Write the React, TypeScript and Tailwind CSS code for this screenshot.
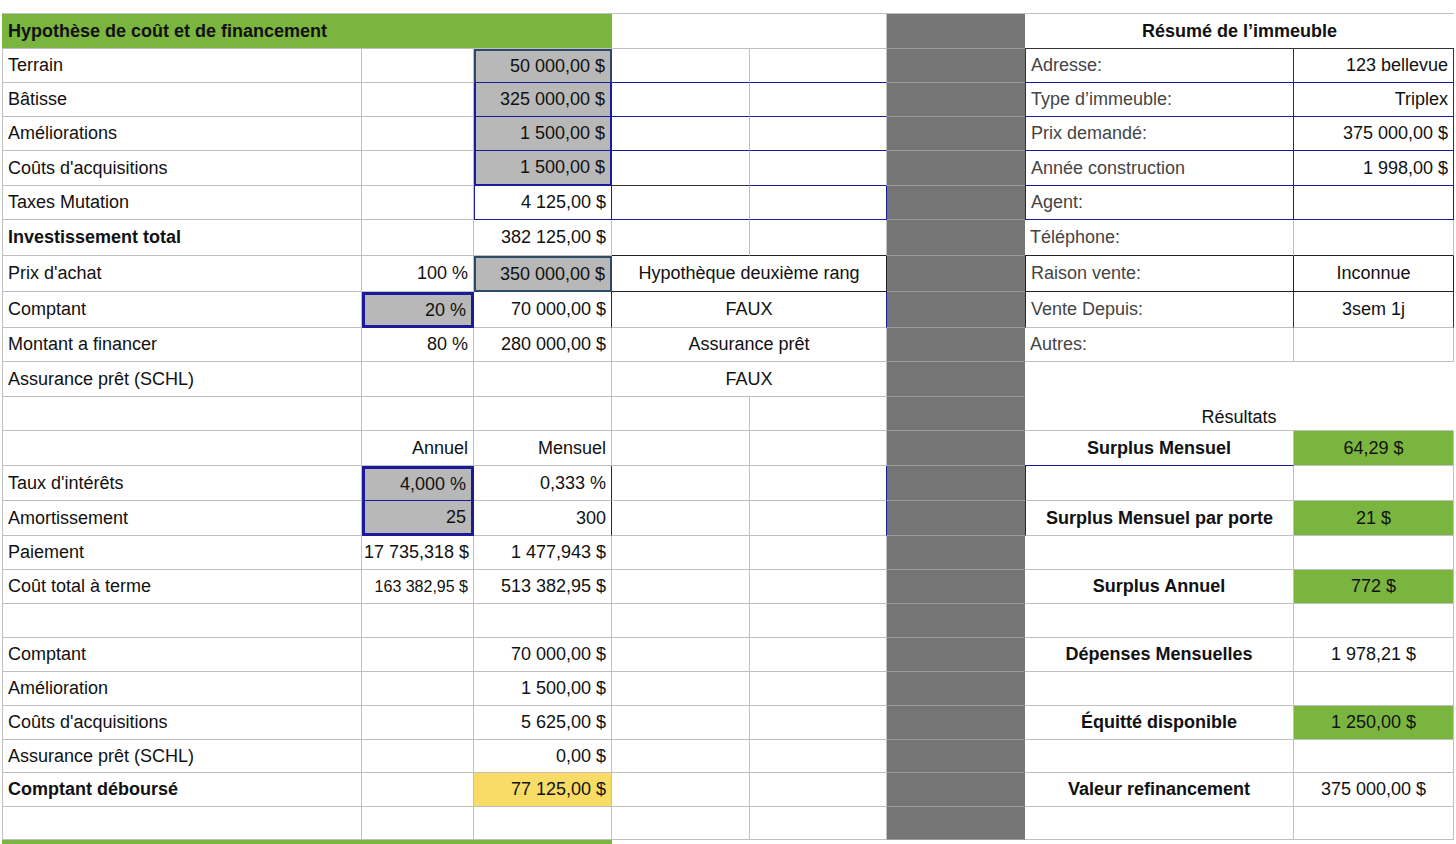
import React from "react";

type C = { t?: string; span?: number; cls?: string; box?: boolean };
const G = "bg-[#b8b8b8]";
const GR = "bg-[#7ab53f]";
const F: C = { cls: "bg-[#767676] border-b-[#9a9a9a] border-r-[#767676]" };
const E: C = {};

const rows: { h: string; cells: C[] }[] = [
  { h: "h-[34px]", cells: [{ t: "Terrain" }, E, { t: "50 000,00 $", box: true, cls: `${G} text-right border-2 border-[#2c4a66] border-b-[#1a1a9a] border-b` }, { cls: "border-b-[#1a1aa0]" }, { cls: "border-b-[#1a1aa0]" }, F, { t: "Adresse:", cls: "text-[#444] border-l border-l-[#333] border-b-[#1a1aa0] border-r-[#333]" }, { t: "123 bellevue", cls: "text-right border-b-[#1a1aa0] border-r-[#333]" }] },
  { h: "h-[34px]", cells: [{ t: "Bâtisse" }, E, { t: "325 000,00 $", box: true, cls: `${G} text-right border-x-2 border-b border-[#1a1a9a]` }, { cls: "border-b-[#1a1aa0]" }, { cls: "border-b-[#1a1aa0]" }, F, { t: "Type d’immeuble:", cls: "text-[#444] border-l border-l-[#333] border-b-[#1a1aa0] border-r-[#333]" }, { t: "Triplex", cls: "text-right border-b-[#1a1aa0] border-r-[#333]" }] },
  { h: "h-[34px]", cells: [{ t: "Améliorations" }, E, { t: "1 500,00 $", box: true, cls: `${G} text-right border-x-2 border-b border-[#1a1a9a]` }, { cls: "border-b-[#1a1aa0]" }, { cls: "border-b-[#1a1aa0]" }, F, { t: "Prix demandé:", cls: "text-[#444] border-l border-l-[#333] border-b-[#1a1aa0] border-r-[#333]" }, { t: "375 000,00 $", cls: "text-right border-b-[#1a1aa0] border-r-[#333]" }] },
  { h: "h-[35px]", cells: [{ t: "Coûts d'acquisitions" }, E, { t: "1 500,00 $", box: true, cls: `${G} text-right border-x-2 border-b-2 border-[#1a1a9a]` }, { cls: "border-b-[#333]" }, { cls: "border-b-[#1a1aa0]" }, F, { t: "Année construction", cls: "text-[#444] border-l border-l-[#333] border-b-[#1a1aa0] border-r-[#333]" }, { t: "1 998,00 $", cls: "text-right border-b-[#1a1aa0] border-r-[#333]" }] },
  { h: "h-[34px]", cells: [{ t: "Taxes Mutation" }, E, { t: "4 125,00 $", box: true, cls: "text-right border-x border-b border-[#1a1aa0]" }, { cls: "border-b-[#1a1aa0]" }, { cls: "border-b-[#1a1aa0] border-r-[#1a1aa0]" }, F, { t: "Agent:", cls: "text-[#444] border-l border-l-[#1a1aa0] border-b-[#1a1aa0] border-r-[#1a1aa0]" }, { t: "", cls: "border-b-[#1a1aa0] border-r-[#1a1aa0]" }] },
  { h: "h-[36px]", cells: [{ t: "Investissement total", cls: "font-bold" }, E, { t: "382 125,00 $", cls: "text-right" }, { cls: "border-b-[#222]" }, { cls: "border-b-[#222]" }, F, { t: "Téléphone:", cls: "text-[#444] border-b-[#222]" }, { cls: "border-b-[#222]" }] },
  { h: "h-[36px]", cells: [{ t: "Prix d'achat" }, { t: "100 %", cls: "text-right" }, { t: "350 000,00 $", box: true, cls: `${G} text-right border-2 border-[#2c4a66]` }, { t: "Hypothèque deuxième rang", span: 2, cls: "text-center border-r-[#222] border-b-[#222]" }, F, { t: "Raison vente:", cls: "text-[#444] border-l border-l-[#222] border-b-[#222] border-r-[#222]" }, { t: "Inconnue", cls: "text-center border-b-[#222] border-r-[#222]" }] },
  { h: "h-[36px]", cells: [{ t: "Comptant" }, { t: "20 %", box: true, cls: `${G} text-right border-[3px] border-[#1a1a9a]` }, { t: "70 000,00 $", cls: "text-right border-r-[#1a1aa0]" }, { t: "FAUX", span: 2, cls: "text-center border-r-[#1a1aa0]" }, F, { t: "Vente Depuis:", cls: "text-[#444] border-l border-l-[#1a1aa0] border-r-[#333]" }, { t: "3sem 1j", cls: "text-center border-r-[#333]" }] },
  { h: "h-[34px]", cells: [{ t: "Montant a financer" }, { t: "80 %", cls: "text-right" }, { t: "280 000,00 $", cls: "text-right" }, { t: "Assurance prêt", span: 2, cls: "text-center" }, F, { t: "Autres:", cls: "text-[#444]" }, E] },
  { h: "h-[35px]", cells: [{ t: "Assurance prêt (SCHL)" }, E, E, { t: "FAUX", span: 2, cls: "text-center" }, F, { span: 2, cls: "border-b-white border-r-white" }] },
  { h: "h-[34px]", cells: [E, E, E, E, E, F, { t: "Résultats", span: 2, cls: "text-center border-r-white pt-[8px]" }] },
  { h: "h-[35px]", cells: [E, { t: "Annuel", cls: "text-right" }, { t: "Mensuel", cls: "text-right" }, E, E, F, { t: "Surplus Mensuel", cls: "font-bold text-center border-b-[#1a1aa0]" }, { t: "64,29 $", cls: `${GR} text-center` }] },
  { h: "h-[35px]", cells: [{ t: "Taux d'intérêts" }, { t: "4,000 %", box: true, cls: `${G} text-right border-x-[3px] border-t-[3px] border-b border-[#1a1a9a]` }, { t: "0,333 %", cls: "text-right border-r-[#1a1aa0]" }, E, { cls: "border-r-[#1a1aa0]" }, F, { cls: "border-l border-l-[#1a1aa0]" }, E] },
  { h: "h-[35px]", cells: [{ t: "Amortissement" }, { t: "25", box: true, cls: `${G} text-right border-x-[3px] border-b-[3px] border-[#1a1a9a]` }, { t: "300", cls: "text-right border-r-[#1a1aa0]" }, E, { cls: "border-r-[#1a1aa0]" }, F, { t: "Surplus Mensuel par porte", cls: "font-bold text-center border-l border-l-[#1a1aa0]" }, { t: "21 $", cls: `${GR} text-center` }] },
  { h: "h-[34px]", cells: [{ t: "Paiement" }, { t: "17 735,318 $", cls: "text-right !pl-0 !pr-[4px]" }, { t: "1 477,943 $", cls: "text-right" }, E, E, F, E, E] },
  { h: "h-[34px]", cells: [{ t: "Coût total à terme" }, { t: "163 382,95 $", cls: "text-right text-[16px]" }, { t: "513 382,95 $", cls: "text-right" }, E, E, F, { t: "Surplus Annuel", cls: "font-bold text-center" }, { t: "772 $", cls: `${GR} text-center` }] },
  { h: "h-[34px]", cells: [E, E, E, E, E, F, E, E] },
  { h: "h-[34px]", cells: [{ t: "Comptant" }, E, { t: "70 000,00 $", cls: "text-right" }, E, E, F, { t: "Dépenses Mensuelles", cls: "font-bold text-center" }, { t: "1 978,21 $", cls: "text-center" }] },
  { h: "h-[34px]", cells: [{ t: "Amélioration" }, E, { t: "1 500,00 $", cls: "text-right" }, E, E, F, E, E] },
  { h: "h-[34px]", cells: [{ t: "Coûts d'acquisitions" }, E, { t: "5 625,00 $", cls: "text-right" }, E, E, F, { t: "Équitté disponible", cls: "font-bold text-center" }, { t: "1 250,00 $", cls: `${GR} text-center` }] },
  { h: "h-[33px]", cells: [{ t: "Assurance prêt (SCHL)" }, E, { t: "0,00 $", cls: "text-right" }, E, E, F, E, E] },
  { h: "h-[34px]", cells: [{ t: "Comptant déboursé", cls: "font-bold" }, E, { t: "77 125,00 $", cls: "bg-[#f8dc66] text-right" }, E, E, F, { t: "Valeur refinancement", cls: "font-bold text-center" }, { t: "375 000,00 $", cls: "text-center" }] },
  { h: "h-[33px]", cells: [E, E, E, E, E, F, E, E] },
];

const spanCls: Record<number, string> = { 1: "", 2: "col-span-2", 3: "col-span-3" };
const cols = "grid grid-cols-[360px_112px_138px_138px_137px_138px_269px_160px]";

export default function App() {
  return (
    <div className="w-[1456px] h-[844px] overflow-hidden bg-white text-[18px] text-[#111]" style={{ fontFamily: "Arimo, 'Liberation Sans', Arial, sans-serif" }}>
      <div className="ml-[2px] mt-[13px] w-[1452px] border-t border-[#c0c0c0]">
        <div className={`${cols} h-[35px]`}>
          <div className={`col-span-3 ${GR} font-bold flex items-center px-[6px] border-b border-[#c0c0c0]`}>Hypothèse de coût et de financement</div>
          <div className="col-span-2 border-b border-r border-[#c0c0c0]" />
          <div className="bg-[#767676] border-b border-[#9a9a9a]" />
          <div className="col-span-2 font-bold flex items-center justify-center border-b border-[#333]">Résumé de l’immeuble</div>
        </div>
        {rows.map((r, i) => (
          <div key={i} className={`${cols} ${r.h}`}>
            {r.cells.map((c, j) => {
              const just = (c.cls || "").includes("text-right") ? "justify-end" : (c.cls || "").includes("text-center") ? "justify-center" : "justify-start";
              const base = c.box ? "" : `border-r border-b border-[#c0c0c0] ${j === 0 ? "border-l" : ""}`;
              return (
                <div key={j} className={`${spanCls[c.span || 1]} flex items-center ${just} px-[5px] whitespace-nowrap overflow-hidden ${base} ${c.cls || ""}`}>
                  {c.t}
                </div>
              );
            })}
          </div>
        ))}
        <div className="w-[610px] h-[4px] bg-[#7ab53f]" />
      </div>
    </div>
  );
}
